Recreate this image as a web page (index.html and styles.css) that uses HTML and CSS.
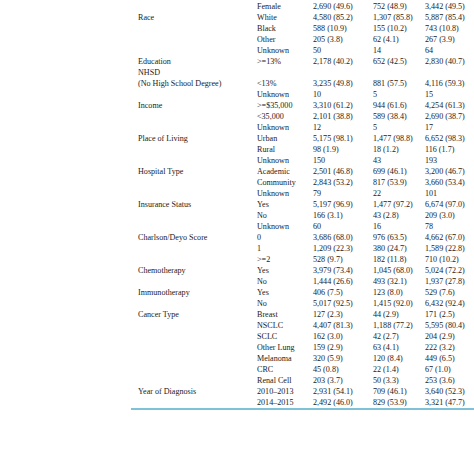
FILE: index.html
```html
<!DOCTYPE html>
<html lang="en">
<head>
<meta charset="utf-8">
<title>Table</title>
<link rel="stylesheet" href="styles.css">
</head>
<body>
<div class="wrap">
<div class="data">
<span></span><span>Female</span><span>2,690 (49.6)</span><span>752 (48.9)</span><span>3,442 (49.5)</span>
<span>Race</span><span>White</span><span>4,580 (85.2)</span><span>1,307 (85.8)</span><span>5,887 (85.4)</span>
<span></span><span>Black</span><span>588 (10.9)</span><span>155 (10.2)</span><span>743 (10.8)</span>
<span></span><span>Other</span><span>205 (3.8)</span><span>62 (4.1)</span><span>267 (3.9)</span>
<span></span><span>Unknown</span><span>50</span><span>14</span><span>64</span>
<span>Education</span><span>&gt;=13%</span><span>2,178 (40.2)</span><span>652 (42.5)</span><span>2,830 (40.7)</span>
<span>NHSD</span><span></span><span></span><span></span><span></span>
<span>(No High School Degree)</span><span>&lt;13%</span><span>3,235 (49.8)</span><span>881 (57.5)</span><span>4,116 (59.3)</span>
<span></span><span>Unknown</span><span>10</span><span>5</span><span>15</span>
<span>Income</span><span>&gt;=$35,000</span><span>3,310 (61.2)</span><span>944 (61.6)</span><span>4,254 (61.3)</span>
<span></span><span>&lt;35,000</span><span>2,101 (38.8)</span><span>589 (38.4)</span><span>2,690 (38.7)</span>
<span></span><span>Unknown</span><span>12</span><span>5</span><span>17</span>
<span>Place of Living</span><span>Urban</span><span>5,175 (98.1)</span><span>1,477 (98.8)</span><span>6,652 (98.3)</span>
<span></span><span>Rural</span><span>98 (1.9)</span><span>18 (1.2)</span><span>116 (1.7)</span>
<span></span><span>Unknown</span><span>150</span><span>43</span><span>193</span>
<span>Hospital Type</span><span>Academic</span><span>2,501 (46.8)</span><span>699 (46.1)</span><span>3,200 (46.7)</span>
<span></span><span>Community</span><span>2,843 (53.2)</span><span>817 (53.9)</span><span>3,660 (53.4)</span>
<span></span><span>Unknown</span><span>79</span><span>22</span><span>101</span>
<span>Insurance Status</span><span>Yes</span><span>5,197 (96.9)</span><span>1,477 (97.2)</span><span>6,674 (97.0)</span>
<span></span><span>No</span><span>166 (3.1)</span><span>43 (2.8)</span><span>209 (3.0)</span>
<span></span><span>Unknown</span><span>60</span><span>16</span><span>78</span>
<span>Charlson/Deyo Score</span><span>0</span><span>3,686 (68.0)</span><span>976 (63.5)</span><span>4,662 (67.0)</span>
<span></span><span>1</span><span>1,209 (22.3)</span><span>380 (24.7)</span><span>1,589 (22.8)</span>
<span></span><span>&gt;=2</span><span>528 (9.7)</span><span>182 (11.8)</span><span>710 (10.2)</span>
<span>Chemotherapy</span><span>Yes</span><span>3,979 (73.4)</span><span>1,045 (68.0)</span><span>5,024 (72.2)</span>
<span></span><span>No</span><span>1,444 (26.6)</span><span>493 (32.1)</span><span>1,937 (27.8)</span>
<span>Immunotherapy</span><span>Yes</span><span>406 (7.5)</span><span>123 (8.0)</span><span>529 (7.6)</span>
<span></span><span>No</span><span>5,017 (92.5)</span><span>1,415 (92.0)</span><span>6,432 (92.4)</span>
<span>Cancer Type</span><span>Breast</span><span>127 (2.3)</span><span>44 (2.9)</span><span>171 (2.5)</span>
<span></span><span>NSCLC</span><span>4,407 (81.3)</span><span>1,188 (77.2)</span><span>5,595 (80.4)</span>
<span></span><span>SCLC</span><span>162 (3.0)</span><span>42 (2.7)</span><span>204 (2.9)</span>
<span></span><span>Other Lung</span><span>159 (2.9)</span><span>63 (4.1)</span><span>222 (3.2)</span>
<span></span><span>Melanoma</span><span>320 (5.9)</span><span>120 (8.4)</span><span>449 (6.5)</span>
<span></span><span>CRC</span><span>45 (0.8)</span><span>22 (1.4)</span><span>67 (1.0)</span>
<span></span><span>Renal Cell</span><span>203 (3.7)</span><span>50 (3.3)</span><span>253 (3.6)</span>
<span>Year of Diagnosis</span><span>2010–2013</span><span>2,931 (54.1)</span><span>709 (46.1)</span><span>3,640 (52.3)</span>
<span></span><span>2014–2015</span><span>2,492 (46.0)</span><span>829 (53.9)</span><span>3,321 (47.7)</span>
</div>
</div>
</body>
</html>
```

FILE: styles.css
```css
html, body {
  margin: 0;
  padding: 0;
  background: #ffffff;
}

.wrap {
  padding: 1px 0 0 131px;
}

.data {
  display: grid;
  grid-template-columns: 126px 56px 60px 52px 49px;
  grid-auto-rows: 11px;
  font-family: "Liberation Serif", "DejaVu Serif", serif;
  font-size: 8.1px;
  line-height: 11px;
  color: #222222;
  border-bottom: 2px solid #7fc2d7;
}

.data span {
  white-space: nowrap;
  overflow: visible;
}

.data span:nth-child(5n+1) {
  padding-left: 7px;
}
```
